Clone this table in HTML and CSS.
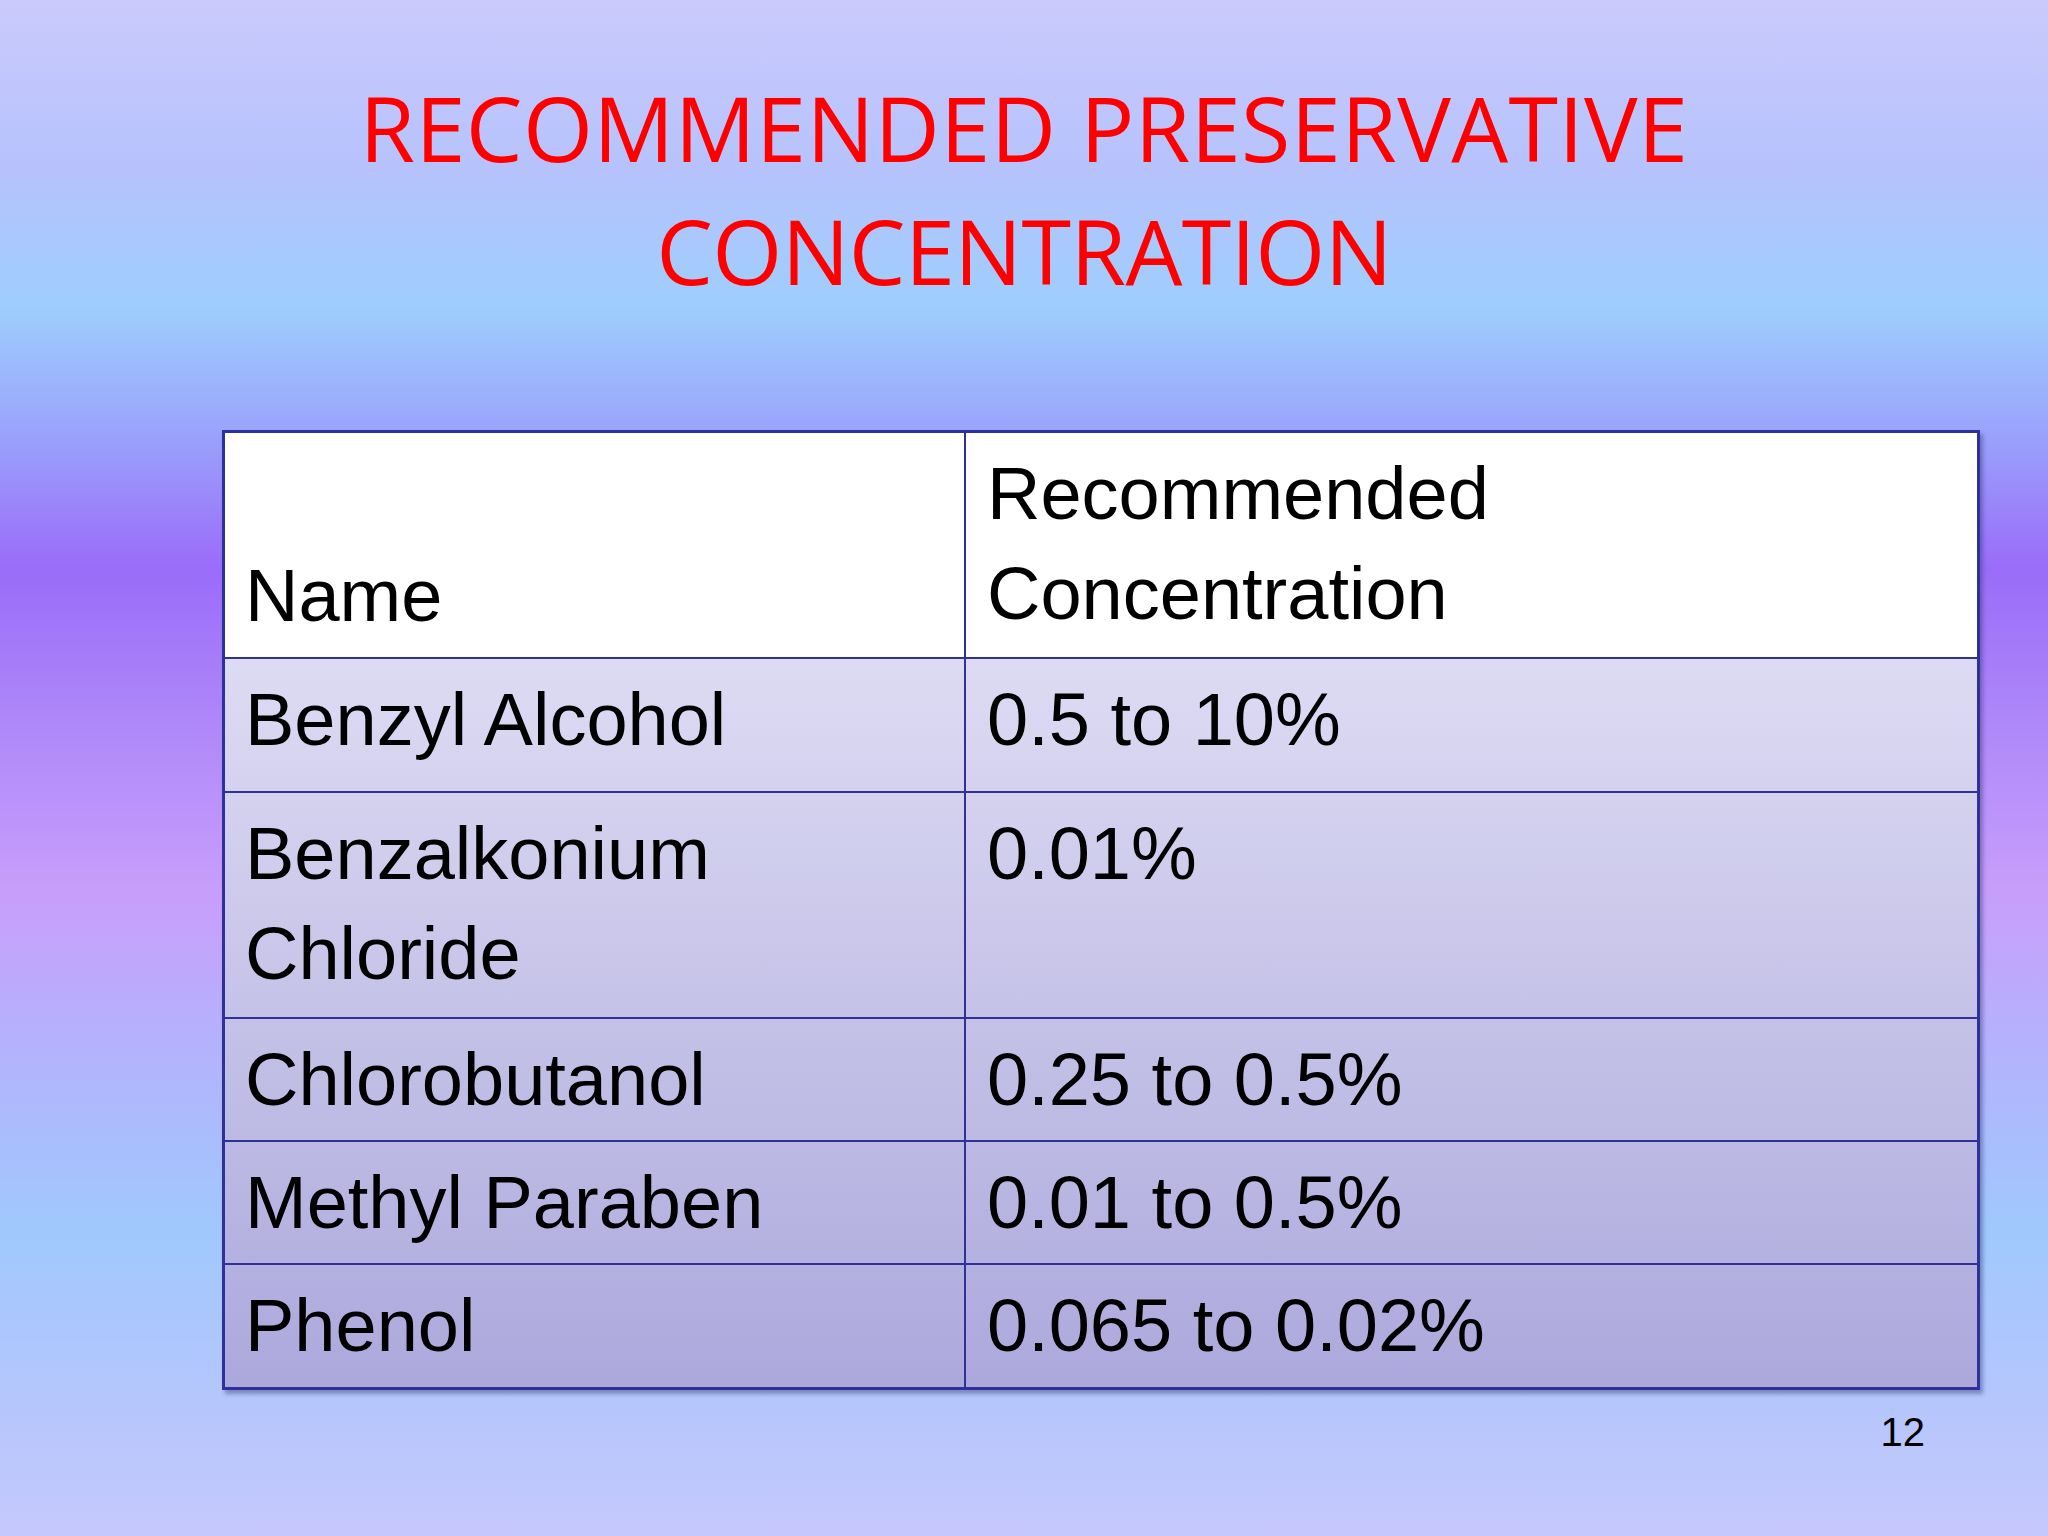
FILE: index.html
```html
<!DOCTYPE html>
<html lang="en">
<head>
<meta charset="utf-8">
<title>Recommended Preservative Concentration</title>
<link rel="stylesheet" href="styles.css">
</head>
<body>
<div class="slide">
  <h1 class="title">
    <span class="title-line wide">RECOMMENDED PRESERVATIVE</span>
    <span class="title-line">CONCENTRATION</span>
  </h1>
  <div class="table">
    <div class="row head">
      <div class="cell c1 bottom">Name</div>
      <div class="cell c2">Recommended<br>Concentration</div>
    </div>
    <div class="body">
      <div class="row r1">
        <div class="cell c1">Benzyl Alcohol</div>
        <div class="cell c2">0.5 to 10%</div>
      </div>
      <div class="row r2">
        <div class="cell c1">Benzalkonium<br>Chloride</div>
        <div class="cell c2">0.01%</div>
      </div>
      <div class="row r3">
        <div class="cell c1">Chlorobutanol</div>
        <div class="cell c2">0.25 to 0.5%</div>
      </div>
      <div class="row r4">
        <div class="cell c1">Methyl Paraben</div>
        <div class="cell c2">0.01 to 0.5%</div>
      </div>
      <div class="row r5 last">
        <div class="cell c1">Phenol</div>
        <div class="cell c2">0.065 to 0.02%</div>
      </div>
    </div>
  </div>
  <div class="footer">
    <span class="page-num">12</span>
  </div>
</div>
</body>
</html>
```

FILE: styles.css
```css
html, body {
  margin: 0;
  padding: 0;
}

.slide {
  width: 2048px;
  height: 1536px;
  box-sizing: border-box;
  padding-top: 66px;
  overflow: hidden;
  background: linear-gradient(to bottom,
    #cacafc 0%,
    #b6c2fc 11%,
    #9ecefd 20%,
    #9aa4fc 28%,
    #9a6cf9 37%,
    #b08af9 48%,
    #c89efb 58%,
    #b4b2fc 68%,
    #a0c8fd 80%,
    #b6c6fc 92%,
    #c6c8fc 100%);
  font-family: "Liberation Sans", Arial, sans-serif;
}

.title {
  margin: 0;
  font-family: "Open Sans", "Liberation Sans", sans-serif;
  font-weight: 400;
  font-size: 90px;
  line-height: 123px;
  letter-spacing: -0.6px;
  color: #ff0000;
  text-align: center;
}

.title-line {
  display: block;
}

.title-line.wide {
  letter-spacing: 0.4px;
}

.table {
  margin-top: 118px;
  margin-left: 222px;
  width: 1758px;
  box-sizing: border-box;
  border: 3px solid #30309a;
  box-shadow: 3px 4px 4px rgba(50, 60, 120, 0.45);
  color: #000;
  font-size: 74px;
  line-height: 100px;
}

.row {
  display: grid;
  grid-template-columns: 741px 1011px;
  box-sizing: border-box;
  border-bottom: 2px solid #30309a;
}

.row.last {
  border-bottom: none;
}

.head {
  background: #ffffff;
  height: 226px;
}

.body {
  background: linear-gradient(to bottom, #dddbf3 0%, #aca8dc 100%);
}

.r1 { height: 134px; }
.r2 { height: 226px; }
.r3 { height: 123px; }
.r4 { height: 123px; }
.r5 { height: 122px; }

.cell {
  box-sizing: border-box;
  padding-top: 11px;
  white-space: nowrap;
}

.c1 {
  padding-left: 20px;
  border-right: 2px solid #30309a;
}

.c2 {
  padding-left: 21px;
}

.cell.bottom {
  display: flex;
  align-items: flex-end;
  padding-top: 0;
  padding-bottom: 11px;
}

.footer {
  display: flex;
  justify-content: flex-end;
  padding-right: 123px;
  margin-top: 20px;
}

.page-num {
  font-family: "Liberation Sans", Arial, sans-serif;
  font-size: 40px;
  color: #000;
}
```
